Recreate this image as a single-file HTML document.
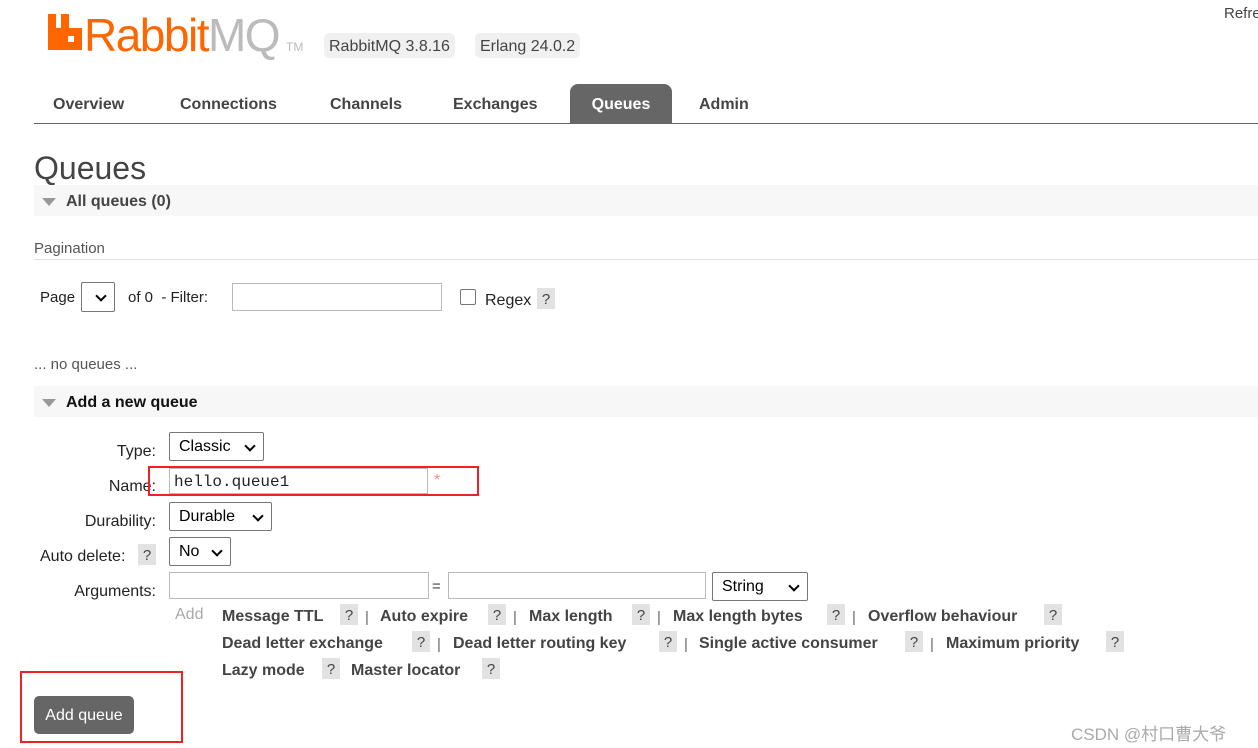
<!DOCTYPE html>
<html><head><meta charset="utf-8"><style>
body{margin:0;width:1258px;height:748px;background:#fff;font-family:"Liberation Sans","DejaVu Sans",sans-serif;position:relative;overflow:hidden;color:#333}
.a{position:absolute;white-space:nowrap}
div.a:not([style*="background"]):not([style*="border"]){margin-top:2px}
.b{font-weight:bold}
.sel{position:absolute;border:1px solid #767676;border-radius:2px;background:#fff;font-size:16px;color:#000;box-sizing:border-box;padding:5px 0 0 9px}
.sel:after{content:"";position:absolute;right:9px;top:9px;width:6px;height:6px;border-right:2px solid #000;border-bottom:2px solid #000;transform:rotate(45deg)}
.inp{position:absolute;border:1px solid #bbb;background:#fff;box-sizing:border-box}
.q{position:absolute;background:#e2e2e2;width:18px;height:21px;text-align:center;font-size:15px;line-height:23px;color:#444}
.opt{font-weight:bold;font-size:16px;color:#444}
.sep{color:#666;font-size:15px}
</style></head><body>
<svg class="a" style="left:48px;top:14px" width="34" height="36" viewBox="0 0 34 36"><path d="M0 0h8v14h5V0h8v14h13v22H0z" fill="#f60"/><rect x="20" y="22" width="6" height="6" fill="#fff"/></svg>
<div class="a" style="left:84px;top:6px;font-size:46px;color:#f60;letter-spacing:-1.5px">Rabbit<span style="color:#bbb">MQ</span></div>
<div class="a" style="left:286px;top:38px;font-size:12px;color:#bbb">TM</div>
<div class="a" style="left:324px;top:33px;background:#f0f0f0;border-radius:5px;padding:5px 5px 2px;font-size:16px;color:#444">RabbitMQ 3.8.16</div>
<div class="a" style="left:475px;top:33px;background:#f0f0f0;border-radius:5px;padding:5px 5px 2px;font-size:16px;color:#444">Erlang 24.0.2</div>
<div class="a" style="left:1224px;top:3px;font-size:15px;color:#444">Refre</div>
<div class="a" style="left:34px;top:123px;width:1224px;height:1px;background:#666"></div>
<div class="a b" style="left:53px;top:94px;font-size:16px;color:#444">Overview</div>
<div class="a b" style="left:180px;top:94px;font-size:16px;color:#444">Connections</div>
<div class="a b" style="left:330px;top:94px;font-size:16px;color:#444">Channels</div>
<div class="a b" style="left:453px;top:94px;font-size:16px;color:#444">Exchanges</div>
<div class="a b" style="left:570px;top:84px;width:102px;height:40px;background:#666;border-radius:8px 8px 0 0;color:#fff;font-size:16px;text-align:center;line-height:42px">Queues</div>
<div class="a b" style="left:699px;top:94px;font-size:16px;color:#444">Admin</div>
<div class="a" style="left:34px;top:148px;font-size:32px;color:#444">Queues</div>
<div class="a" style="left:34px;top:185px;width:1224px;height:31px;background:#f7f7f7"></div>
<div class="a" style="left:42px;top:198px;width:0;height:0;border-left:7px solid transparent;border-right:7px solid transparent;border-top:8px solid #999"></div>
<div class="a b" style="left:66px;top:191px;font-size:16px;color:#444">All queues (0)</div>
<div class="a" style="left:34px;top:238px;font-size:15px;color:#555">Pagination</div>
<div class="a" style="left:34px;top:259px;width:1224px;height:1px;background:#e0e0e0"></div>
<div class="a" style="left:40px;top:287px;font-size:15px;color:#222">Page</div>
<div class="sel" style="left:81px;top:282px;width:34px;height:30px"></div>
<div class="a" style="left:128px;top:287px;font-size:15px;color:#222">of 0 &nbsp;- Filter:</div>
<div class="inp" style="left:232px;top:283px;width:210px;height:28px"></div>
<div class="a" style="left:460px;top:289px;width:14px;height:14px;border:1px solid #767676;border-radius:2px"></div>
<div class="a" style="left:485px;top:290px;font-size:16px;color:#222">Regex</div>
<div class="q" style="left:537px;top:288px">?</div>
<div class="a" style="left:34px;top:354px;font-size:15px;color:#555">... no queues ...</div>
<div class="a" style="left:34px;top:386px;width:1224px;height:31px;background:#f7f7f7"></div>
<div class="a" style="left:42px;top:399px;width:0;height:0;border-left:7px solid transparent;border-right:7px solid transparent;border-top:8px solid #999"></div>
<div class="a b" style="left:66px;top:392px;font-size:16px;color:#111">Add a new queue</div>
<div class="a" style="right:1102px;top:441px;font-size:16px;color:#222">Type:</div>
<div class="sel" style="left:169px;top:432px;width:95px;height:29px">Classic</div>
<div class="a" style="right:1102px;top:476px;font-size:16px;color:#222">Name:</div>
<div class="inp" style="left:169px;top:468px;width:259px;height:26px;font-family:'Liberation Mono',monospace;font-size:16px;color:#222;padding:4px 4px">hello.queue1</div>
<div class="a" style="left:434px;top:470px;color:#f88;font-size:16px">*</div>
<div class="a" style="left:148px;top:466px;width:327px;height:26px;border:2px solid #e22"></div>
<div class="a" style="right:1102px;top:511px;font-size:16px;color:#222">Durability:</div>
<div class="sel" style="left:169px;top:502px;width:103px;height:29px">Durable</div>
<div class="a" style="left:40px;top:546px;font-size:16px;color:#222">Auto delete:</div>
<div class="q" style="left:138px;top:544px">?</div>
<div class="sel" style="left:169px;top:537px;width:62px;height:29px">No</div>
<div class="a" style="right:1102px;top:581px;font-size:16px;color:#222">Arguments:</div>
<div class="inp" style="left:169px;top:572px;width:260px;height:27px"></div>
<div class="a" style="left:432px;top:576px;font-size:15px;color:#444">=</div>
<div class="inp" style="left:448px;top:572px;width:258px;height:27px"></div>
<div class="sel" style="left:712px;top:572px;width:96px;height:29px">String</div>
<div class="a" style="left:175px;top:604px;font-size:16px;color:#aaa">Add</div>
<div class="a opt" style="left:222px;top:606px">Message TTL</div><div class="q" style="left:340px;top:604px">?</div><div class="a sep" style="left:365px;top:607px">|</div>
<div class="a opt" style="left:380px;top:606px">Auto expire</div><div class="q" style="left:488px;top:604px">?</div><div class="a sep" style="left:513px;top:607px">|</div>
<div class="a opt" style="left:529px;top:606px">Max length</div><div class="q" style="left:632px;top:604px">?</div><div class="a sep" style="left:657px;top:607px">|</div>
<div class="a opt" style="left:673px;top:606px">Max length bytes</div><div class="q" style="left:827px;top:604px">?</div><div class="a sep" style="left:852px;top:607px">|</div>
<div class="a opt" style="left:868px;top:606px">Overflow behaviour</div><div class="q" style="left:1044px;top:604px">?</div>
<div class="a opt" style="left:222px;top:633px">Dead letter exchange</div><div class="q" style="left:412px;top:631px">?</div><div class="a sep" style="left:437px;top:634px">|</div>
<div class="a opt" style="left:453px;top:633px">Dead letter routing key</div><div class="q" style="left:659px;top:631px">?</div><div class="a sep" style="left:684px;top:634px">|</div>
<div class="a opt" style="left:699px;top:633px">Single active consumer</div><div class="q" style="left:905px;top:631px">?</div><div class="a sep" style="left:930px;top:634px">|</div>
<div class="a opt" style="left:946px;top:633px">Maximum priority</div><div class="q" style="left:1106px;top:631px">?</div>
<div class="a opt" style="left:222px;top:660px">Lazy mode</div><div class="q" style="left:322px;top:658px">?</div>
<div class="a opt" style="left:351px;top:660px">Master locator</div><div class="q" style="left:482px;top:658px">?</div>
<div class="a" style="left:34px;top:696px;width:100px;height:38px;background:#666;border-radius:5px;color:#fff;font-size:16px;text-align:center;line-height:40px">Add queue</div>
<div class="a" style="left:20px;top:671px;width:159px;height:68px;border:2px solid #e22"></div>
<div class="a" style="left:1071px;top:718px;font-size:17px;color:#aaa;font-family:'Liberation Sans','Noto Sans CJK SC',sans-serif">CSDN @村口曹大爷</div>
</body></html>
